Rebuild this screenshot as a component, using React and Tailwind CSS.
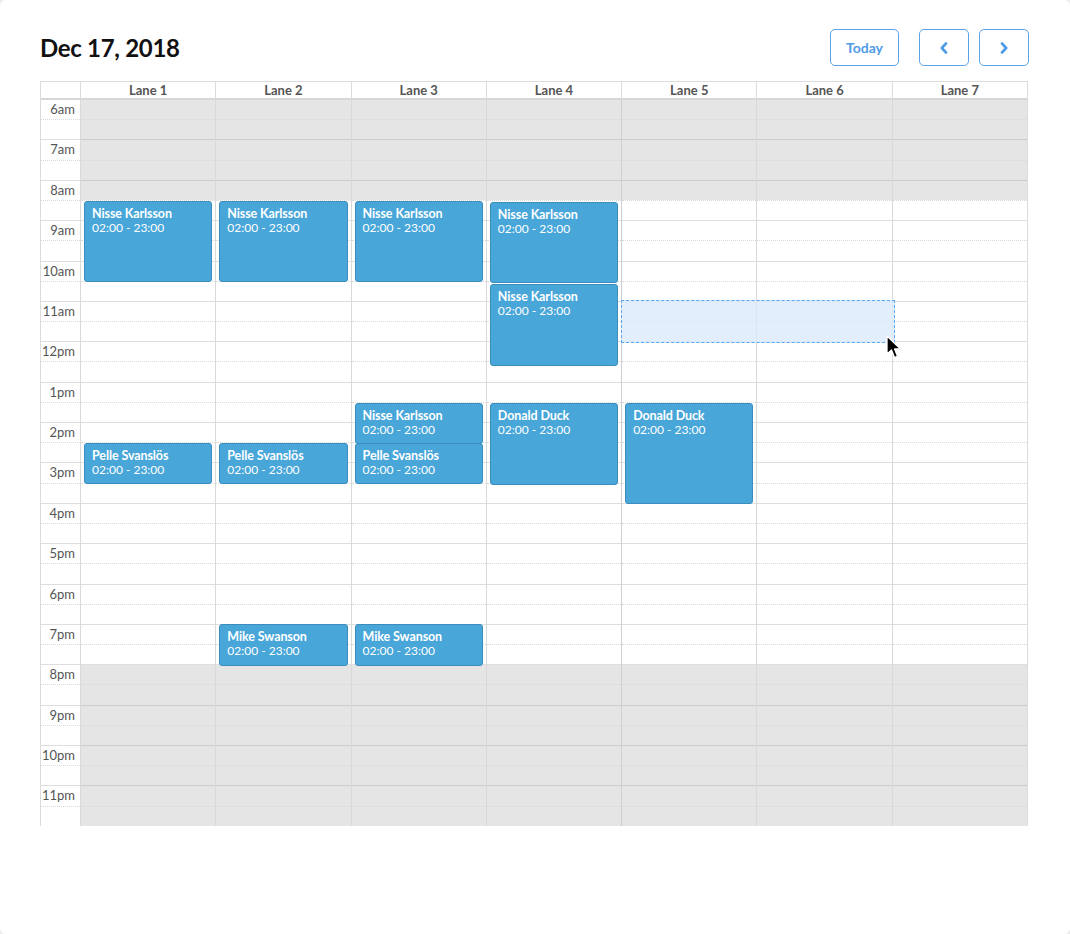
import React from 'react';

const lanes = ['Lane 1', 'Lane 2', 'Lane 3', 'Lane 4', 'Lane 5', 'Lane 6', 'Lane 7'];
const hours = ['6am', '7am', '8am', '9am', '10am', '11am', '12pm', '1pm', '2pm', '3pm', '4pm', '5pm', '6pm', '7pm', '8pm', '9pm', '10pm', '11pm'];
const SLOT = 726 / 36;

// events: start slot, number of slots
const events = {
  0: [
    { name: 'Nisse Karlsson', start: 5, len: 4 },
    { name: 'Pelle Svanslös', start: 17, len: 2 },
  ],
  1: [
    { name: 'Nisse Karlsson', start: 5, len: 4 },
    { name: 'Pelle Svanslös', start: 17, len: 2 },
    { name: 'Mike Swanson', start: 26, len: 2 },
  ],
  2: [
    { name: 'Nisse Karlsson', start: 5, len: 4 },
    { name: 'Nisse Karlsson', start: 15, len: 2 },
    { name: 'Pelle Svanslös', start: 17, len: 2 },
    { name: 'Mike Swanson', start: 26, len: 2 },
  ],
  3: [
    { name: 'Nisse Karlsson', start: 5.05, len: 4 },
    { name: 'Nisse Karlsson', start: 9.1, len: 4.05 },
    { name: 'Donald Duck', start: 15, len: 4.05 },
  ],
  4: [{ name: 'Donald Duck', start: 15, len: 4.98 }],
};

const isGray = (i) => i < 5 || i >= 28;

const Slots = ({ gray, withLabels }) => (
  <div className="flex flex-col h-[726px]">
    {Array.from({ length: 36 }).map((_, i) => {
      const hourStart = i % 2 === 0;
      const bg = gray && isGray(i) ? 'bg-[#e5e5e5]' : 'bg-white';
      const line = hourStart
        ? i === 0
          ? ''
          : gray && isGray(i) && isGray(i - 1)
          ? 'border-t border-[#cccccc]'
          : 'border-t border-[#dedede]'
        : 'border-t border-dotted border-[#dadada]';
      return (
        <div key={i} className={`flex-1 ${bg} ${line} relative`}>
          {withLabels && hourStart && (
            <div className="text-right pr-[5px] pt-[1px] text-[13px] leading-[16px] text-[#555]">{hours[i / 2]}</div>
          )}
        </div>
      );
    })}
  </div>
);

const Event = ({ name, start, len }) => (
  <div
    className="absolute left-[3px] right-[3px] bg-[#48a6d9] border border-[#3b8dbd] rounded-[3px] px-[7px] pt-[5px] text-white text-[12px] leading-[14px] overflow-hidden"
    style={{ top: start * SLOT, height: len * SLOT + 1 }}
  >
    <div className="font-bold text-[12.5px] tracking-[-0.1px]">{name}</div>
    <div>02:00 - 23:00</div>
  </div>
);

const Cursor = () => (
  <svg width="18" height="26" viewBox="0 0 18 26" className="absolute left-[886px] top-[335px]">
    <path d="M1 1 L1 19 L5.5 15 L8.5 22.5 L11.5 21.2 L8.6 14 L14.5 14 Z" fill="#000" stroke="#fff" strokeWidth="1.3" strokeLinejoin="round" />
  </svg>
);

export default function App() {
  return (
    <div className="w-[1070px] h-[934px] bg-[#ececec] font-['Lato','Open_Sans',sans-serif]">
      <div className="relative w-full h-full bg-white rounded-[6px] px-[40px] pt-[29px]">
        <div className="flex items-center justify-between w-[989px] h-[37px]">
          <h1 className="text-[24px] font-bold text-[#111] tracking-[-0.3px]">Dec 17, 2018</h1>
          <div className="flex items-center">
            <button className="w-[69px] h-[37px] border border-[#5ea3e8] rounded-[5px] text-[#4f9be6] text-[14px] font-bold">
              Today
            </button>
            <button className="ml-[20px] w-[50px] h-[37px] border border-[#5ea3e8] rounded-[5px] flex items-center justify-center">
              <svg width="10" height="12" viewBox="0 0 10 12">
                <path d="M7 1.5 L2.8 6 L7 10.5" fill="none" stroke="#4f9be6" strokeWidth="2.6" strokeLinecap="round" strokeLinejoin="round" />
              </svg>
            </button>
            <button className="ml-[10px] w-[50px] h-[37px] border border-[#5ea3e8] rounded-[5px] flex items-center justify-center">
              <svg width="10" height="12" viewBox="0 0 10 12">
                <path d="M3 1.5 L7.2 6 L3 10.5" fill="none" stroke="#4f9be6" strokeWidth="2.6" strokeLinecap="round" strokeLinejoin="round" />
              </svg>
            </button>
          </div>
        </div>

        <div className="mt-[15px] w-[988px] border border-[#dcdcdc] border-b-0">
          <div className="grid grid-cols-[39px_repeat(7,1fr)] h-[18px] border-b-2 border-[#d6d6d6]">
            <div />
            {lanes.map((l) => (
              <div key={l} className="border-l border-[#dcdcdc] text-center text-[13px] leading-[16px] font-bold text-[#555]">
                {l}
              </div>
            ))}
          </div>
          <div className="grid grid-cols-[39px_repeat(7,1fr)]">
            <Slots withLabels />
            {lanes.map((l, li) => (
              <div key={l} className={`relative border-l ${li === 4 ? 'border-[#cfcfcf]' : 'border-[#d9d9d9]'}`}>
                <Slots gray />
                {(events[li] || []).map((e, i) => (
                  <Event key={i} {...e} />
                ))}
              </div>
            ))}
          </div>
        </div>

        <div className="absolute left-[621px] top-[300px] w-[274px] h-[43px] bg-[#dbeafa]/80 border border-dashed border-[#5aa8f5]" />
        <Cursor />
      </div>
    </div>
  );
}
